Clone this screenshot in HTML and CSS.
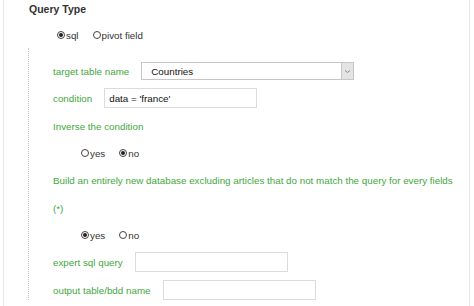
FILE: index.html
```html
<!DOCTYPE html>
<html>
<head>
<meta charset="utf-8">
<link rel="stylesheet" href="styles.css">
</head>
<body>
<div class="panel">
  <div class="title">Query Type</div>
  <div class="radios top-radios">
    <span class="radio checked"></span><span class="rlabel">sql</span>
    <span class="radio"></span><span class="rlabel">pivot field</span>
  </div>
  <div class="sub">
    <div class="row">
      <span class="label">target table name</span>
      <div class="select"><span class="select-text">Countries</span><span class="select-btn"><svg width="7" height="5" viewBox="0 0 7 5"><path d="M1 1.5 L3.5 3.5 L6 1.5" fill="none" stroke="#888" stroke-width="1"/></svg></span></div>
    </div>
    <div class="row tall">
      <span class="label">condition</span>
      <div class="input">data = 'france'</div>
    </div>
    <div class="row text">Inverse the condition</div>
    <div class="radios">
      <span class="radio"></span><span class="rlabel">yes</span>
      <span class="radio checked"></span><span class="rlabel">no</span>
    </div>
    <div class="row text">Build an entirely new database excluding articles that do not match the query for every fields</div>
    <div class="row text">(*)</div>
    <div class="radios">
      <span class="radio checked"></span><span class="rlabel">yes</span>
      <span class="radio"></span><span class="rlabel">no</span>
    </div>
    <div class="row tall">
      <span class="label">expert sql query</span>
      <div class="input"></div>
    </div>
    <div class="row tall">
      <span class="label">output table/bdd name</span>
      <div class="input"></div>
    </div>
  </div>
</div>
</body>
</html>
```

FILE: styles.css
```css
html, body {
  margin: 0;
  padding: 0;
  background: #fff;
}
body {
  font-family: "Liberation Sans", Arial, sans-serif;
  font-size: 9.8px;
  color: #333;
}
.panel {
  margin: 0 4px 0 3px;
  height: 306px;
  box-sizing: border-box;
  border-left: 1px solid #e8e8e8;
  border-right: 1px solid #e8e8e8;
  padding-left: 25px;
}
.title {
  height: 18px;
  line-height: 18px;
  font-weight: bold;
  font-size: 10.5px;
  color: #333;
}
.radios {
  display: flex;
  align-items: center;
  height: 18px;
  padding-left: 28px;
}
.top-radios {
  margin-top: 8px;
}
.radio {
  width: 8px;
  height: 8px;
  border: 1px solid #444;
  border-radius: 50%;
  box-sizing: border-box;
  position: relative;
  margin-right: 1px;
}
.radio.checked::after {
  content: "";
  position: absolute;
  left: 1px;
  top: 1px;
  width: 4px;
  height: 4px;
  border-radius: 50%;
  background: #222;
}
.rlabel {
  margin-right: 14px;
  color: #333;
}
.sub {
  margin-top: 4px;
  margin-left: -1px;
  border-left: 1px dotted #c8c8c8;
  padding: 14px 0 0 24px;
  display: flex;
  flex-direction: column;
  gap: 8px;
}
.row {
  display: flex;
  align-items: center;
  height: 18px;
  color: #3fa83c;
}
.row.tall, .row.text {
  height: 20px;
}
.label {
  margin-right: 12px;
  color: #3fa83c;
}
.select {
  width: 213px;
  height: 18px;
  box-sizing: border-box;
  border: 1px solid #c6c6c6;
  display: flex;
  align-items: center;
  background: #fff;
}
.select-text {
  flex: 1;
  padding-left: 9px;
  color: #111;
}
.select-btn {
  width: 11px;
  height: 100%;
  background: #e4e4e4;
  border-left: 1px solid #c6c6c6;
  display: flex;
  align-items: center;
  justify-content: center;
}
.input {
  width: 153px;
  height: 20px;
  box-sizing: border-box;
  border: 1px solid #dcdcdc;
  padding-left: 4px;
  display: flex;
  align-items: center;
  color: #111;
}
```
